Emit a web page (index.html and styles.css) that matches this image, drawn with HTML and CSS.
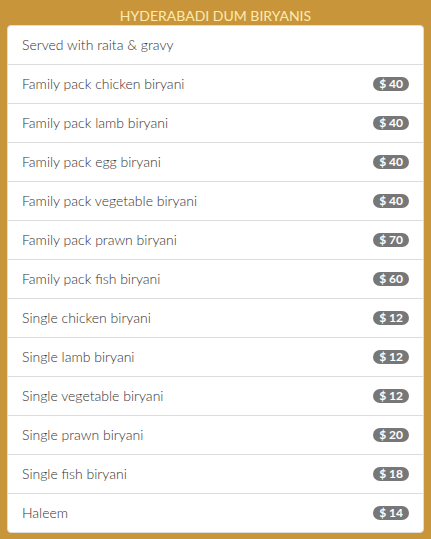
FILE: index.html
```html
<!DOCTYPE html>
<html lang="en">
<head>
    <meta charset="UTF-8">
    <meta name="viewport" content="width=device-width, initial-scale=1.0">
    <title>Hyderabadi Dum Biryanis</title>
    <link rel="stylesheet" href="styles.css">
</head>
<body>
    <div class="menu-panel">
        <h2 class="menu-title">HYDERABADI DUM BIRYANIS</h2>
        <ul class="menu-list">
            <li class="menu-item">Served with raita &amp; gravy</li>
            <li class="menu-item">Family pack chicken biryani <span class="badge">$ 40</span></li>
            <li class="menu-item">Family pack lamb biryani <span class="badge">$ 40</span></li>
            <li class="menu-item">Family pack egg biryani <span class="badge">$ 40</span></li>
            <li class="menu-item">Family pack vegetable biryani <span class="badge">$ 40</span></li>
            <li class="menu-item">Family pack prawn biryani <span class="badge">$ 70</span></li>
            <li class="menu-item">Family pack fish biryani <span class="badge">$ 60</span></li>
            <li class="menu-item">Single chicken biryani <span class="badge">$ 12</span></li>
            <li class="menu-item">Single lamb biryani <span class="badge">$ 12</span></li>
            <li class="menu-item">Single vegetable biryani <span class="badge">$ 12</span></li>
            <li class="menu-item">Single prawn biryani <span class="badge">$ 20</span></li>
            <li class="menu-item">Single fish biryani <span class="badge">$ 18</span></li>
            <li class="menu-item">Haleem <span class="badge">$ 14</span></li>
        </ul>
    </div>
</body>
</html>
```

FILE: styles.css
```css
body {
    margin: 0;
    background-color: #c9953a;
    font-family: Lato, 'Open Sans', sans-serif;
}
.menu-panel {
    padding: 0 7px 7px 7px;
}
.menu-title {
    margin: 0;
    height: 25px;
    line-height: 31px;
    font-size: 14px;
    font-weight: 400;
    text-align: center;
    color: #fcebb0;
}
.menu-list {
    list-style: none;
    margin: 0;
    padding: 0;
    background-color: #fff;
    border: 1px solid #ddd;
    border-radius: 4px;
}
.menu-item {
    display: flex;
    justify-content: space-between;
    align-items: center;
    padding: 10px 14px;
    line-height: 18px;
    font-size: 14px;
    font-weight: 300;
    color: #333;
    border-top: 1px solid #ddd;
}
.menu-item:first-child {
    border-top: none;
}
.badge {
    background-color: #777;
    color: #fff;
    font-size: 12px;
    font-weight: 700;
    line-height: 12px;
    padding: 1px 6px;
    border-radius: 10px;
}
```
